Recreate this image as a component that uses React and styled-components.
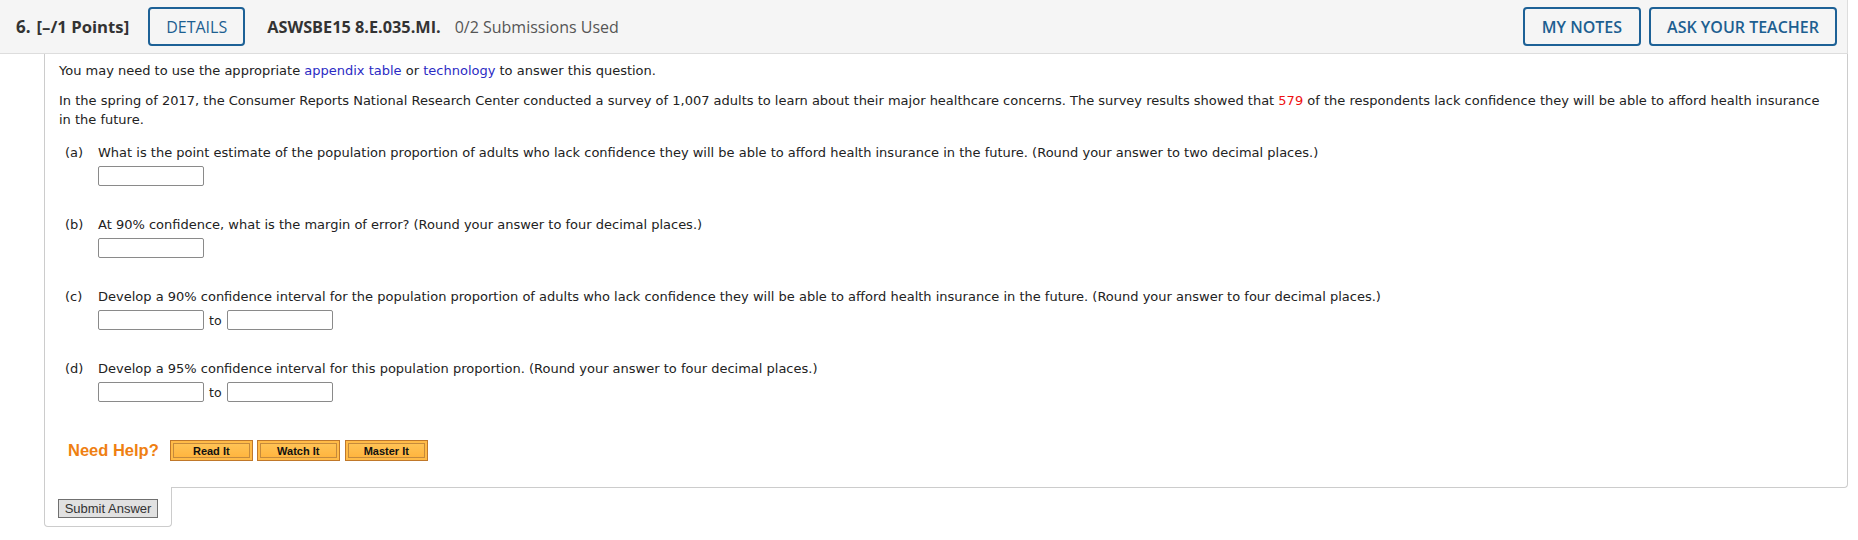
import React from "react";
import styled, { createGlobalStyle } from "styled-components";

const GlobalStyle = createGlobalStyle`
	body {
		margin: 0;
		background: #ffffff;
	}
`;

const Page = styled.div`
	width: 1848px;
`;

// header bar
const Header = styled.div`
	display: flex;
	align-items: center;
	justify-content: space-between;
	height: 54px;
	background: #f5f5f5;
	border-bottom: 1px solid #dddddd;
	border-right: 1px solid #dddddd;
	box-sizing: border-box;
	padding: 0 10px 0 16px;
	font-family: "Open Sans", sans-serif;
	font-size: 16px;
	color: #333333;
`;

const HeaderLeft = styled.div`
	display: flex;
	align-items: center;
`;

const HeaderRight = styled.div`
	display: flex;
	align-items: center;
	gap: 8px;
`;

const Number = styled.span`
	font-weight: 700;
	font-size: 17px;
	margin-right: 6px;
`;

const Points = styled.span`
	font-weight: 700;
	font-size: 16.7px;
	margin-right: 19px;
`;

const OutlineButton = styled.button`
	height: 39px;
	padding: 0 ${(props) => props.pad || 18}px;
	background: transparent;
	border: 2px solid #1d6196;
	border-radius: 4px;
	font-family: "Open Sans", sans-serif;
	font-size: 16px;
	font-weight: ${(props) => (props.bold ? 600 : 400)};
	color: #1d5f91;
	margin-right: ${(props) => props.mr || 0}px;
`;

const Code = styled.span`
	font-weight: 700;
	font-size: 16.3px;
	margin-right: 14px;
`;

const Used = styled.span`
	color: #555555;
`;

// question panel
const Panel = styled.div`
	margin-left: 44px;
	border-left: 1px solid #cccccc;
	border-right: 1px solid #cccccc;
	border-bottom: 1px solid #cccccc;
	border-bottom-right-radius: 4px;
	padding: 7px 14px 26px 14px;
	font-family: "DejaVu Sans", Verdana, sans-serif;
	font-size: 13px;
	line-height: 19px;
	color: #222222;
`;

const Para = styled.p`
	margin: 0 0 ${(props) => props.mb || 11}px 0;
`;

const Link = styled.span`
	color: #2b2bc4;
`;

const Red = styled.span`
	color: #ee1111;
`;

const Part = styled.div`
	display: grid;
	grid-template-columns: 39px 1fr;
	margin-bottom: 29px;
`;

const PartLabel = styled.div`
	padding-left: 6px;
`;

const Question = styled.div``;

const Answers = styled.div`
	grid-column: 2;
	display: flex;
	align-items: center;
	margin-top: 4px;
`;

const Input = styled.div`
	width: 104px;
	height: 18px;
	border: 1px solid #8a8a8a;
	border-radius: 2px;
	background: #ffffff;
`;

const To = styled.span`
	margin: 0 5px 0 5px;
	font-size: 12.5px;
`;

const HelpRow = styled.div`
	display: flex;
	align-items: center;
	margin-top: 38px;
	padding-left: 9px;
`;

const HelpText = styled.span`
	font-family: "Liberation Sans", Arial, sans-serif;
	font-weight: 700;
	font-size: 16.5px;
	color: #ef7f12;
	margin-right: 11px;
`;

const HelpButton = styled.button`
	width: 83px;
	height: 21px;
	padding: 0;
	margin-right: ${(props) => props.mr || 4}px;
	background: linear-gradient(#ffc65a, #ffb23a);
	border: 1px solid #c0782a;
	box-shadow: inset 0 0 0 2px #ffbb48, inset 0 0 0 3px #c58a3c;
	font-family: "Liberation Sans", Arial, sans-serif;
	font-weight: 700;
	font-size: 11px;
	color: #111111;
`;

const SubmitTab = styled.div`
	margin-left: 44px;
	margin-top: -1px;
	width: 128px;
	height: 40px;
	box-sizing: border-box;
	background: #ffffff;
	border: 1px solid #cccccc;
	border-top: none;
	border-radius: 0 0 4px 4px;
	padding: 12px 0 0 13px;
`;

const SubmitButton = styled.button`
	width: 100px;
	height: 19px;
	padding: 0;
	background: #e1e1e1;
	border: 1px solid #707070;
	border-radius: 0;
	font-family: "Liberation Sans", Arial, sans-serif;
	font-size: 13px;
	color: #333333;
`;

const parts = [
	{
		label: "(a)",
		text: "What is the point estimate of the population proportion of adults who lack confidence they will be able to afford health insurance in the future. (Round your answer to two decimal places.)",
		range: false,
	},
	{
		label: "(b)",
		text: "At 90% confidence, what is the margin of error? (Round your answer to four decimal places.)",
		range: false,
	},
	{
		label: "(c)",
		text: "Develop a 90% confidence interval for the population proportion of adults who lack confidence they will be able to afford health insurance in the future. (Round your answer to four decimal places.)",
		range: true,
	},
	{
		label: "(d)",
		text: "Develop a 95% confidence interval for this population proportion. (Round your answer to four decimal places.)",
		range: true,
	},
];

export default function App() {
	return (
		<Page>
			<GlobalStyle />
			<Header>
				<HeaderLeft>
					<Number>6.</Number>
					<Points>[–/1 Points]</Points>
					<OutlineButton pad={16} mr={22}>DETAILS</OutlineButton>
					<Code>ASWSBE15 8.E.035.MI.</Code>
					<Used>0/2 Submissions Used</Used>
				</HeaderLeft>
				<HeaderRight>
					<OutlineButton bold pad={17}>MY NOTES</OutlineButton>
					<OutlineButton bold pad={16}>ASK YOUR TEACHER</OutlineButton>
				</HeaderRight>
			</Header>
			<Panel>
				<Para>
					You may need to use the appropriate <Link>appendix table</Link> or <Link>technology</Link> to answer this question.
				</Para>
				<Para mb={14}>
					In the spring of 2017, the Consumer Reports National Research Center conducted a survey of 1,007 adults to learn about their major healthcare concerns. The survey results showed that <Red>579</Red> of the respondents lack confidence they will be able to afford health insurance in the future.
				</Para>
				{parts.map((p) => (
					<Part key={p.label}>
						<PartLabel>{p.label}</PartLabel>
						<Question>{p.text}</Question>
						<Answers>
							<Input />
							{p.range && (
								<>
									<To>to</To>
									<Input />
								</>
							)}
						</Answers>
					</Part>
				))}
				<HelpRow>
					<HelpText>Need Help?</HelpText>
					<HelpButton>Read It</HelpButton>
					<HelpButton mr={5}>Watch It</HelpButton>
					<HelpButton>Master It</HelpButton>
				</HelpRow>
			</Panel>
			<SubmitTab>
				<SubmitButton>Submit Answer</SubmitButton>
			</SubmitTab>
		</Page>
	);
}
